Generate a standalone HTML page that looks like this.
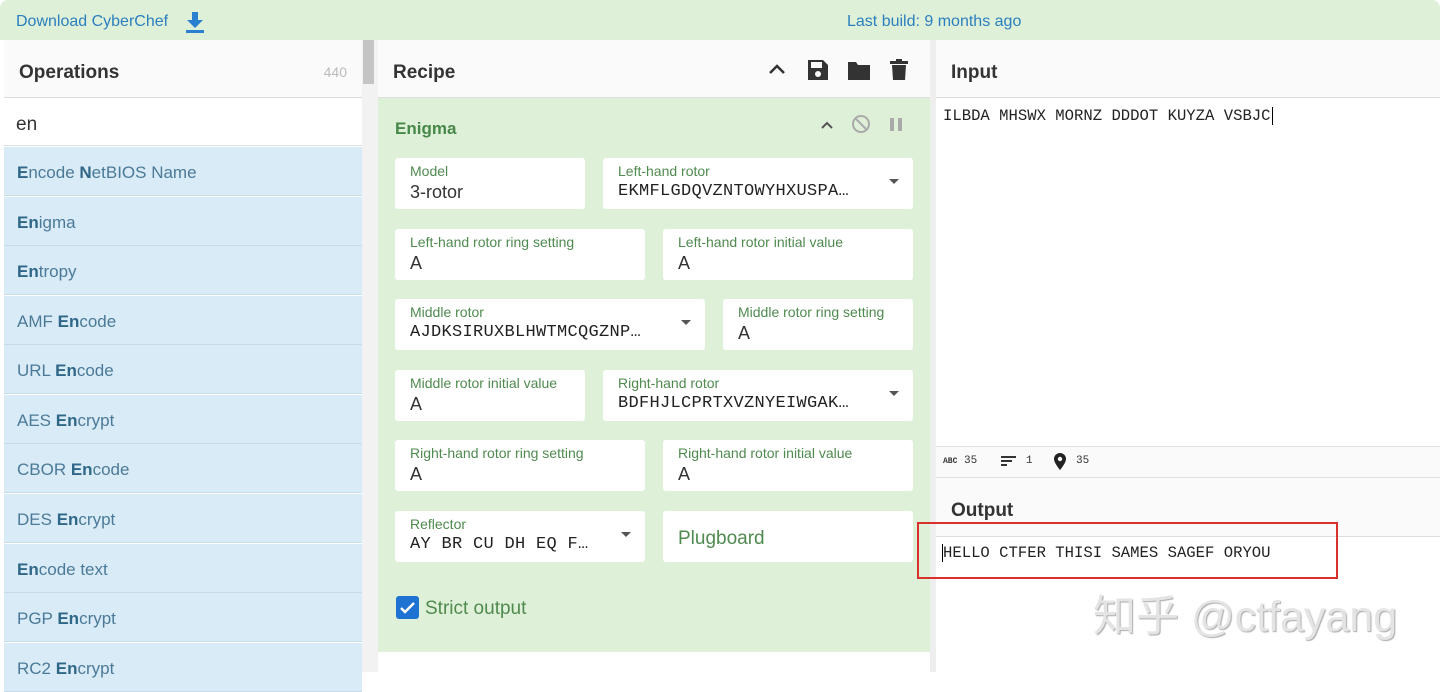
<!DOCTYPE html>
<html><head><meta charset="utf-8"><style>
*{box-sizing:border-box;margin:0;padding:0}
body{width:1440px;height:672px;overflow:hidden;background:#fff;font-family:"Liberation Sans",sans-serif;color:#333;position:relative}
.abs{position:absolute}
.top{left:0;top:0;width:1440px;height:40px;background:#dff0d8;border-radius:8px 8px 0 0}
.hdr{background:#fafafa;border-bottom:1px solid #ddd;height:58px;font-weight:bold;font-size:19px;padding:22px 0 0 15px}
.item{position:absolute;left:4px;width:358px;height:49px;background:#d9ebf7;border-bottom:1px solid #c8dbe8;color:#4a7a98;font-size:17px;padding:16px 0 0 13px}
.item b{color:#2f6788}
.f{position:absolute;background:#fff;border-radius:3px;height:51px;padding:5px 0 0 15px}
.f .l{font-size:14px;color:#4f8a4f}
.f .v{font-size:18px;color:#333;margin-top:3px}
.f .m{font-family:"Liberation Mono",monospace;font-size:17px;color:#222;margin-top:3px;letter-spacing:.3px}
.car{position:absolute;right:14px;top:21px;width:0;height:0;border-left:5px solid transparent;border-right:5px solid transparent;border-top:5px solid #555}
.mono{font-family:"Liberation Mono",monospace;font-size:15.6px;color:#222}
</style></head><body>
<div class="abs top"></div>
<div class="abs" style="left:16px;top:13px;font-size:16px;color:#2a7fbf">Download CyberChef</div>
<svg class="abs" style="left:185px;top:12px" width="20" height="22" viewBox="0 0 20 22"><path d="M7 0h6v8h5l-8 8-8-8h5z" fill="#2a7fd0"/><rect x="1" y="18" width="18" height="3" fill="#2a7fd0"/></svg>
<div class="abs" style="left:847px;top:13px;font-size:16px;color:#2a7fbf">Last build: 9 months ago</div>

<div class="abs hdr" style="left:4px;top:40px;width:358px;padding-left:15px">Operations<span style="position:absolute;right:15px;top:24px;font-size:14px;font-weight:normal;color:#bbb">440</span></div>
<div class="abs" style="left:4px;top:98px;width:358px;height:48px;background:#fff;border-bottom:1px solid #ddd;font-size:19px;padding:16px 0 0 12px">en</div>
<div class="item" style="top:147px"><b>E</b>ncode <b>N</b>etBIOS Name</div>
<div class="item" style="top:197px"><b>En</b>igma</div>
<div class="item" style="top:246px"><b>En</b>tropy</div>
<div class="item" style="top:296px">AMF <b>En</b>code</div>
<div class="item" style="top:345px">URL <b>En</b>code</div>
<div class="item" style="top:395px">AES <b>En</b>crypt</div>
<div class="item" style="top:444px">CBOR <b>En</b>code</div>
<div class="item" style="top:494px">DES <b>En</b>crypt</div>
<div class="item" style="top:544px"><b>En</b>code text</div>
<div class="item" style="top:593px">PGP <b>En</b>crypt</div>
<div class="item" style="top:643px">RC2 <b>En</b>crypt</div>
<div class="abs" style="left:362px;top:40px;width:16px;height:632px;background:#f2f2f2"></div>
<div class="abs" style="left:363px;top:40px;width:11px;height:44px;background:#c4c4c4"></div>

<div class="abs hdr" style="left:378px;top:40px;width:552px">Recipe</div>
<svg class="abs" style="left:768px;top:58px" width="140" height="24" viewBox="0 0 140 24">
<path d="M2 15l7-7 7 7" stroke="#333" stroke-width="2.5" fill="none"/>
<path d="M40 2h15l5 5v15H40z" fill="#333"/><rect x="43" y="4" width="11" height="6" fill="#fafafa"/><circle cx="50" cy="16" r="3" fill="#fafafa"/>
<path d="M80 4h8l2 3h12v15H80z" fill="#333"/>
<rect x="122" y="3" width="18" height="3" fill="#333"/><rect x="128" y="1" width="6" height="3" fill="#333"/><path d="M124 7h14l-1 15h-12z" fill="#333"/>
</svg>
<div class="abs" style="left:378px;top:98px;width:552px;height:554px;background:#dff0d8"></div>
<div class="abs" style="left:395px;top:119px;font-size:17px;font-weight:bold;color:#468847">Enigma</div>
<svg class="abs" style="left:818px;top:114px" width="90" height="22" viewBox="0 0 90 22">
<path d="M4 14l5-5 5 5" stroke="#555" stroke-width="2" fill="none"/>
<circle cx="43" cy="10" r="8" stroke="#aaa" stroke-width="2" fill="none"/><path d="M37 4l12 12" stroke="#aaa" stroke-width="2"/>
<rect x="72" y="4" width="4" height="13" fill="#aaa"/><rect x="80" y="4" width="4" height="13" fill="#aaa"/>
</svg>
<div class="f" style="left:395px;top:158px;width:190px"><div class="l">Model</div><div class="v">3-rotor</div></div>
<div class="f" style="left:603px;top:158px;width:310px"><div class="l">Left-hand rotor</div><div class="m">EKMFLGDQVZNTOWYHXUSPA…</div><div class="car"></div></div>
<div class="f" style="left:395px;top:229px;width:250px"><div class="l">Left-hand rotor ring setting</div><div class="v">A</div></div>
<div class="f" style="left:663px;top:229px;width:250px"><div class="l">Left-hand rotor initial value</div><div class="v">A</div></div>
<div class="f" style="left:395px;top:299px;width:310px"><div class="l">Middle rotor</div><div class="m">AJDKSIRUXBLHWTMCQGZNP…</div><div class="car"></div></div>
<div class="f" style="left:723px;top:299px;width:190px"><div class="l">Middle rotor ring setting</div><div class="v">A</div></div>
<div class="f" style="left:395px;top:370px;width:190px"><div class="l">Middle rotor initial value</div><div class="v">A</div></div>
<div class="f" style="left:603px;top:370px;width:310px"><div class="l">Right-hand rotor</div><div class="m">BDFHJLCPRTXVZNYEIWGAK…</div><div class="car"></div></div>
<div class="f" style="left:395px;top:440px;width:250px"><div class="l">Right-hand rotor ring setting</div><div class="v">A</div></div>
<div class="f" style="left:663px;top:440px;width:250px"><div class="l">Right-hand rotor initial value</div><div class="v">A</div></div>
<div class="f" style="left:395px;top:511px;width:250px"><div class="l">Reflector</div><div class="m">AY BR CU DH EQ F…</div><div class="car"></div></div>
<div class="f" style="left:663px;top:511px;width:250px;padding-top:17px"><div style="font-size:19px;color:#4f8a4f">Plugboard</div></div>
<div class="abs" style="left:396px;top:596px;width:23px;height:23px;background:#1e73d2;border-radius:3px"></div>
<svg class="abs" style="left:396px;top:596px" width="23" height="23"><path d="M5 12l4 4 9-9" stroke="#fff" stroke-width="2.5" fill="none"/></svg>
<div class="abs" style="left:425px;top:598px;font-size:19px;color:#4f8a4f">Strict output</div>
<div class="abs" style="left:930px;top:40px;width:6px;height:632px;background:#eee"></div>

<div class="abs hdr" style="left:936px;top:40px;width:504px">Input</div>
<div class="abs mono" style="left:943px;top:107px">ILBDA MHSWX MORNZ DDDOT KUYZA VSBJC<span style="border-left:1px solid #000;margin-left:1px"></span></div>
<div class="abs" style="left:936px;top:446px;width:504px;height:32px;background:#fafafa;border-top:1px solid #e2e2e2;border-bottom:1px solid #e2e2e2;font-family:'Liberation Mono',monospace;font-size:11px;color:#333">
<span class="abs" style="left:7px;top:8px"><b style="font-size:8px">ABC</b> 35</span>
<svg class="abs" style="left:65px;top:8px" width="16" height="13"><path d="M0 2h15M0 6h11M0 10h6" stroke="#333" stroke-width="2"/></svg>
<span class="abs" style="left:90px;top:8px">1</span>
<svg class="abs" style="left:117px;top:6px" width="14" height="18" viewBox="0 0 14 18"><path d="M7 0a6 6 0 0 1 6 6c0 4-6 11-6 11S1 10 1 6a6 6 0 0 1 6-6z" fill="#222"/><circle cx="7" cy="6" r="2.2" fill="#fafafa"/></svg>
<span class="abs" style="left:140px;top:8px">35</span></div>
<div class="abs hdr" style="left:936px;top:478px;width:504px;height:59px;padding-top:22px">Output</div>
<div class="abs mono" style="left:942px;top:544px"><span style="border-left:1px solid #000"></span>HELLO CTFER THISI SAMES SAGEF ORYOU</div>
<div class="abs" style="left:917px;top:522px;width:421px;height:57px;border:2px solid #d9302c"></div>
<div class="abs" style="left:1093px;top:582px;font-family:'Liberation Sans','Noto Sans CJK SC',sans-serif;font-size:43px;color:#e4e4e4;text-shadow:1px 1px 1px #aaa">知乎 @ctfayang</div>
</body></html>
